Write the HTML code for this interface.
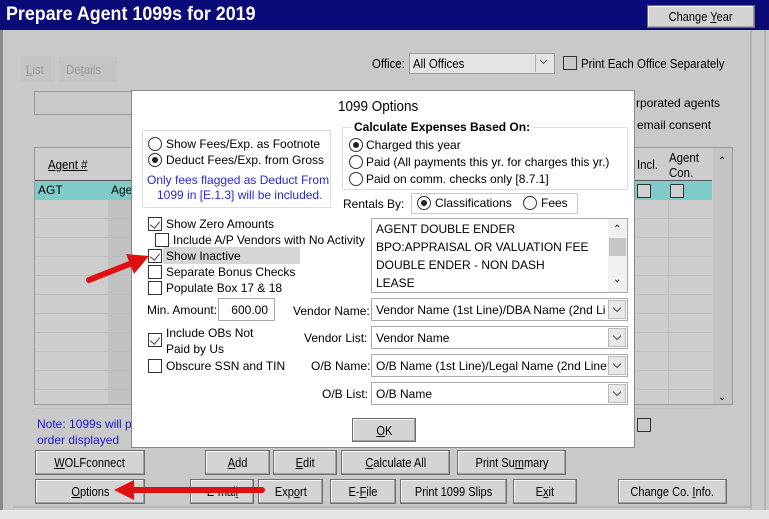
<!DOCTYPE html>
<html><head><meta charset="utf-8"><style>
*{box-sizing:border-box;margin:0;padding:0}
body{width:769px;height:519px;overflow:hidden;background:#e6e6e6;font-family:"Liberation Sans",sans-serif;position:relative}
.a{position:absolute}
.n{font-size:13px;transform-origin:0 50%;white-space:nowrap;color:#000}
.btn{position:absolute;background:#d4d4d4;border:1px solid #6e6e6e;box-shadow:inset -1px -1px 0 #a0a0a0,inset 1px 1px 0 #f4f4f4;font-size:13px;display:flex;align-items:center;justify-content:center;white-space:nowrap}
.btn span{display:inline-block;transform:scaleX(.85)}
.cb{position:absolute;width:14px;height:14px;border:1px solid #333;background:#fff}
.cbg{position:absolute;width:14px;height:14px;border:1px solid #333;background:#d0d0d0}
.rd{position:absolute;width:14px;height:14px;border:1px solid #333;border-radius:50%;background:#fff}
.rd.on::after{content:"";position:absolute;left:3px;top:3px;width:6px;height:6px;border-radius:50%;background:#222}
.t{position:absolute;font-size:12px;white-space:nowrap;color:#000}
.chk::after{content:"";position:absolute;left:3px;top:1px;width:5px;height:8px;border:solid #444;border-width:0 1.5px 1.5px 0;transform:rotate(40deg)}
.combo{position:absolute;left:371px;width:257px;height:23px;border:1px solid #aaa;background:#fff;font-size:12px;padding:4px 0 0 4px;white-space:nowrap;overflow:hidden}
.combo i{position:absolute;right:1px;top:1px;width:18px;height:19px;background:#e8e8e8;border:1px solid #bbb}
.combo i::after{content:"";position:absolute;left:5px;top:4px;width:5px;height:5px;border:solid #555;border-width:0 1px 1px 0;transform:rotate(45deg)}
</style></head><body>
<div class="a" style="left:0;top:0;width:769px;height:510px;background:#c9c9c9"></div>
<div class="a" style="left:0;top:0;width:3px;height:510px;background:#8a8a8a"></div>
<div class="a" style="left:750px;top:30px;width:2px;height:480px;background:#b4b4b4"></div>
<div class="a" style="left:764px;top:30px;width:2px;height:480px;background:#b4b4b4"></div>
<div class="a" style="left:13px;top:506px;width:738px;height:2px;background:#b4b4b4"></div>
<div class="a" style="left:0;top:0;width:769px;height:30px;background:#0a0a78"></div>
<div class="a" style="left:6px;top:4px;color:#fff;font-weight:bold;font-size:19px;transform:scaleX(.94);transform-origin:0 0;white-space:nowrap">Prepare Agent 1099s for 2019</div>
<div class="btn" style="left:647px;top:5px;width:108px;height:23px"><span>Change <u>Y</u>ear</span></div>
<div class="a" style="left:21px;top:56px;width:34px;height:26px;background:#c4c4c4"></div>
<div class="a" style="left:59px;top:57px;width:58px;height:25px;background:#c4c4c4"></div>
<div class="a n" style="left:26px;top:62px;color:#999;transform:scaleX(.88)"><u>L</u>ist</div>
<div class="a n" style="left:66px;top:62px;color:#999;transform:scaleX(.88)">De<u>t</u>ails</div>
<div class="a n" style="left:372px;top:56px;transform:scaleX(.88)">Office:</div>
<div class="a" style="left:409px;top:53px;width:146px;height:21px;border:1px solid #999;background:#e4e4e4"></div>
<div class="a n" style="left:413px;top:56px;transform:scaleX(.88)">All Offices</div>
<div class="a" style="left:535px;top:55px;width:18px;height:17px;border-left:1px solid #aaa"></div>
<div class="a" style="left:541px;top:58px;width:5px;height:5px;border:solid #555;border-width:0 1px 1px 0;transform:rotate(45deg)"></div>
<div class="cb" style="left:563px;top:56px;background:transparent"></div>
<div class="a n" style="left:581px;top:56px;transform:scaleX(.88)">Print Each Office Separately</div>
<div class="a" style="left:34px;top:91px;width:110px;height:24px;border:1px solid #999"></div>
<div class="a" style="left:636px;top:96px;font-size:12px;white-space:nowrap">rporated agents</div>
<div class="a" style="left:637px;top:118px;font-size:12px;white-space:nowrap">email consent</div>
<div class="a" style="left:34px;top:147px;width:699px;height:258px;border:1px solid #999;background:#cdcdcd"></div>
<div class="a" style="left:108px;top:181px;width:30px;height:223px;background:#c2c2c2"></div>
<div class="a" style="left:35px;top:180px;width:677px;height:1px;background:#555"></div>
<div class="a" style="left:35px;top:181px;width:677px;height:19px;background:#7fcbc8"></div>
<div class="a" style="left:713px;top:148px;width:19px;height:256px;background:#c4c4c4"></div>
<div class="a n" style="left:48px;top:157px;transform:scaleX(.88)"><u>Agent #</u></div>
<div class="a" style="left:38px;top:183px;font-size:12px">AGT</div>
<div class="a" style="left:111px;top:183px;font-size:12px">Age</div>
<div class="a n" style="left:637px;top:157px;transform:scaleX(.88)">Incl.</div>
<div class="a n" style="left:669px;top:150px;transform:scaleX(.88);line-height:15px">Agent<br>Con.</div>
<div class="a" style="left:718px;top:156px;font-size:10px">&#8963;</div>
<div class="a" style="left:718px;top:392px;font-size:10px">&#8964;</div>
<div class="cbg" style="left:637px;top:184px"></div>
<div class="cbg" style="left:670px;top:184px"></div>
<div class="a" style="left:35px;top:218px;width:100px;height:1px;background:#bdbdbd;box-shadow:0 19px 0 #bdbdbd,0 38px 0 #bdbdbd,0 57px 0 #bdbdbd,0 76px 0 #bdbdbd,0 95px 0 #bdbdbd,0 114px 0 #bdbdbd,0 133px 0 #bdbdbd,0 152px 0 #bdbdbd,0 171px 0 #bdbdbd,0 190px 0 #bdbdbd"></div>
<div class="a" style="left:636px;top:218px;width:76px;height:1px;background:#bdbdbd;box-shadow:0 19px 0 #bdbdbd,0 38px 0 #bdbdbd,0 57px 0 #bdbdbd,0 76px 0 #bdbdbd,0 95px 0 #bdbdbd,0 114px 0 #bdbdbd,0 133px 0 #bdbdbd,0 152px 0 #bdbdbd,0 171px 0 #bdbdbd,0 190px 0 #bdbdbd"></div>
<div class="a" style="left:668px;top:200px;width:1px;height:204px;background:#bdbdbd"></div>
<div class="a" style="left:37px;top:416px;color:#1a1ad0;font-size:12px;line-height:16px;white-space:nowrap">Note: 1099s will p<br>order displayed</div>
<div class="cb" style="left:637px;top:418px;background:transparent"></div>
<div class="btn" style="left:35px;top:450px;width:110px;height:25px"><span><u>W</u>OLFconnect</span></div>
<div class="btn" style="left:205px;top:450px;width:65px;height:25px"><span><u>A</u>dd</span></div>
<div class="btn" style="left:273px;top:450px;width:64px;height:25px"><span><u>E</u>dit</span></div>
<div class="btn" style="left:341px;top:450px;width:109px;height:25px"><span><u>C</u>alculate All</span></div>
<div class="btn" style="left:457px;top:450px;width:109px;height:25px"><span>Print Su<u>m</u>mary</span></div>
<div class="btn" style="left:35px;top:479px;width:110px;height:25px"><span><u>O</u>ptions</span></div>
<div class="btn" style="left:190px;top:479px;width:64px;height:25px"><span>E-mai<u>l</u></span></div>
<div class="btn" style="left:258px;top:479px;width:65px;height:25px"><span>Exp<u>o</u>rt</span></div>
<div class="btn" style="left:330px;top:479px;width:66px;height:25px"><span>E-<u>F</u>ile</span></div>
<div class="btn" style="left:400px;top:479px;width:107px;height:25px"><span>Print 1099 Slips</span></div>
<div class="btn" style="left:513px;top:479px;width:64px;height:25px"><span>E<u>x</u>it</span></div>
<div class="btn" style="left:618px;top:479px;width:109px;height:25px"><span>Change Co. <u>I</u>nfo.</span></div>
<div class="a" style="left:131px;top:90px;width:504px;height:358px;background:#fff;border:1px solid #888"></div>
<div class="a" style="left:338px;top:98px;font-size:15px;transform:scaleX(.9);transform-origin:0 0">1099 Options</div>
<div class="a" style="left:142px;top:130px;width:189px;height:78px;border:1px solid #ddd"></div>
<div class="rd" style="left:148px;top:137px"></div><div class="t" style="left:166px;top:137px">Show Fees/Exp. as Footnote</div>
<div class="rd on" style="left:148px;top:153px"></div><div class="t" style="left:166px;top:153px">Deduct Fees/Exp. from Gross</div>
<div class="t" style="left:147px;top:173px;color:#2828e0">Only fees flagged as Deduct From</div>
<div class="t" style="left:157px;top:188px;color:#2828e0">1099 in [E.1.3] will be included.</div>
<div class="a" style="left:342px;top:127px;width:286px;height:63px;border:1px solid #ddd"></div>
<div class="a" style="left:351px;top:120px;background:#fff;padding:0 3px;font-size:12px;font-weight:bold">Calculate Expenses Based On:</div>
<div class="rd on" style="left:349px;top:138px"></div><div class="t" style="left:366px;top:138px">Charged this year</div>
<div class="rd" style="left:349px;top:155px"></div><div class="t" style="left:366px;top:155px">Paid (All payments this yr. for charges this yr.)</div>
<div class="rd" style="left:349px;top:172px"></div><div class="t" style="left:366px;top:172px">Paid on comm. checks only [8.7.1]</div>
<div class="t" style="left:343px;top:197px">Rentals By:</div>
<div class="a" style="left:411px;top:193px;width:167px;height:21px;border:1px solid #ccc"></div>
<div class="rd on" style="left:417px;top:196px"></div><div class="t" style="left:435px;top:196px">Classifications</div>
<div class="rd" style="left:523px;top:196px"></div><div class="t" style="left:541px;top:196px">Fees</div>
<div class="a" style="left:163px;top:247px;width:137px;height:17px;background:#d6d6d6"></div>
<div class="cb chk" style="left:148px;top:217px"></div><div class="t" style="left:166px;top:217px">Show Zero Amounts</div>
<div class="cb" style="left:155px;top:233px"></div><div class="t" style="left:173px;top:233px">Include A/P Vendors with No Activity</div>
<div class="cb chk" style="left:148px;top:249px"></div><div class="t" style="left:166px;top:249px">Show Inactive</div>
<div class="cb" style="left:148px;top:265px"></div><div class="t" style="left:166px;top:265px">Separate Bonus Checks</div>
<div class="cb" style="left:148px;top:281px"></div><div class="t" style="left:166px;top:281px">Populate Box 17 &amp; 18</div>
<div class="t" style="left:147px;top:303px">Min. Amount:</div>
<div class="a" style="left:218px;top:298px;width:57px;height:23px;border:1px solid #aaa;font-size:12px;text-align:right;padding:4px 6px 0 0">600.00</div>
<div class="cb chk" style="left:148px;top:333px"></div><div class="t" style="left:166px;top:325px;line-height:16px">Include OBs Not<br>Paid by Us</div>
<div class="cb" style="left:148px;top:359px"></div><div class="t" style="left:166px;top:359px">Obscure SSN and TIN</div>
<div class="a" style="left:371px;top:218px;width:257px;height:75px;border:1px solid #aaa;font-size:12px;line-height:18px;padding:1px 0 0 4px;white-space:nowrap">AGENT DOUBLE ENDER<br>BPO:APPRAISAL OR VALUATION FEE<br>DOUBLE ENDER - NON DASH<br>LEASE</div>
<div class="a" style="left:608px;top:219px;width:19px;height:73px;background:#f0f0f0"></div>
<div class="a" style="left:609px;top:238px;width:17px;height:18px;background:#c6c6c6"></div>
<div class="a" style="left:613px;top:224px;font-size:10px">&#8963;</div>
<div class="a" style="left:613px;top:274px;font-size:10px">&#8964;</div>
<div class="t" style="left:293px;top:304px">Vendor Name:</div>
<div class="combo" style="top:298px">Vendor Name (1st Line)/DBA Name (2nd Li<i></i></div>
<div class="t" style="left:304px;top:331px">Vendor List:</div>
<div class="combo" style="top:326px">Vendor Name<i></i></div>
<div class="t" style="left:311px;top:359px">O/B Name:</div>
<div class="combo" style="top:354px">O/B Name (1st Line)/Legal Name (2nd Line<i></i></div>
<div class="t" style="left:322px;top:387px">O/B List:</div>
<div class="combo" style="top:382px">O/B Name<i></i></div>
<div class="btn" style="left:352px;top:418px;width:64px;height:24px"><span><u>O</u>K</span></div>
<svg class="a" style="left:0;top:0" width="769" height="519">
<line x1="89" y1="280" x2="132" y2="263" stroke="#e01010" stroke-width="6" stroke-linecap="round"/>
<polygon points="149,256 126,254 134,274" fill="#e01010"/>
<line x1="262" y1="490" x2="132" y2="490" stroke="#e01010" stroke-width="6" stroke-linecap="round"/>
<polygon points="114,490 134,480 134,500" fill="#e01010"/>
</svg>
</body></html>
